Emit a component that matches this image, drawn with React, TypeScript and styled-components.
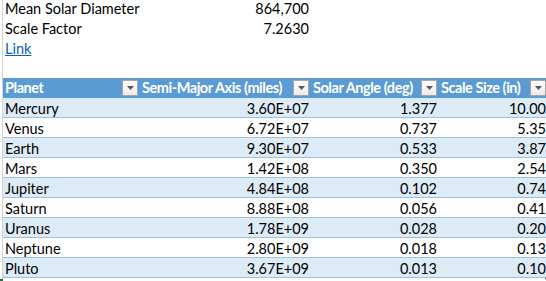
import React from "react";
import styled, { createGlobalStyle } from "styled-components";

const FONT = `"Lato", "Liberation Sans", Arial, sans-serif`;

const Global = createGlobalStyle`
  html, body { margin: 0; padding: 0; background: #ffffff; }
  body { width: 546px; height: 281px; overflow: hidden; font-family: ${FONT}; }
`;

const Sheet = styled.div`
  position: relative;
  margin: -2px 0 0 2px;
  border-left: 1px solid #d4d4d4;
  height: 290px;
  width: 560px;
  font-family: ${FONT};
  font-size: 14.5px;
  color: #000;
`;

const Row = styled.div<{ $band?: "header" | "band" | "plain" | "none" }>`
  display: grid;
  grid-template-columns: 137px 171px 128px 109px;
  height: 20px;
  box-sizing: border-box;
  background: ${(p) =>
    p.$band === "header" ? "#5b9bd5" : p.$band === "band" ? "#ddebf7" : "#ffffff"};
  border-bottom: ${(p) =>
    p.$band === "band" || p.$band === "plain" ? "1px solid #9bc2e6" : "1px solid transparent"};
`;

const Cell = styled.div<{ $right?: boolean }>`
  display: flex;
  align-items: flex-end;
  justify-content: ${(p) => (p.$right ? "flex-end" : "flex-start")};
  padding: 0 2px 0 2px;
  white-space: nowrap;
  overflow: hidden;
  line-height: 16px;
`;

const HeadCell = styled.div`
  display: flex;
  align-items: flex-start;
  justify-content: space-between;
  padding: 2px 2px 0 2px;
  color: #ffffff;
  font-weight: 700;
  letter-spacing: -0.45px;
  white-space: nowrap;
  overflow: hidden;
  line-height: 16px;
`;

const Link = styled.a`
  color: #0563c1;
  text-decoration: underline;
`;

const DropBtn = styled.span`
  flex: 0 0 auto;
  width: 14px;
  height: 14px;
  border: 1px solid #a6a6a6;
  background: linear-gradient(#ffffff, #ececec);
  display: flex;
  align-items: center;
  justify-content: center;
`;

const Handle = styled.div`
  position: absolute;
  right: 14px;
  top: 277px;
  width: 4px;
  height: 4px;
  background: linear-gradient(135deg, transparent 50%, #1f4e79 50%);
`;

const Selection = styled.div`
  position: absolute;
  left: -3px;
  top: 281px;
  width: 3px;
  height: 3px;
  background: #217346;
`;

const Drop = () => (
  <DropBtn>
    <svg width="7" height="4" viewBox="0 0 7 4">
      <path d="M0 0 H7 L3.5 4 Z" fill="#595959" />
    </svg>
  </DropBtn>
);

const planets: [string, string, string, string][] = [
  ["Mercury", "3.60E+07", "1.377", "10.00"],
  ["Venus", "6.72E+07", "0.737", "5.35"],
  ["Earth", "9.30E+07", "0.533", "3.87"],
  ["Mars", "1.42E+08", "0.350", "2.54"],
  ["Jupiter", "4.84E+08", "0.102", "0.74"],
  ["Saturn", "8.88E+08", "0.056", "0.41"],
  ["Uranus", "1.78E+09", "0.028", "0.20"],
  ["Neptune", "2.80E+09", "0.018", "0.13"],
  ["Pluto", "3.67E+09", "0.013", "0.10"],
];

const headers = ["Planet", "Semi-Major Axis (miles)", "Solar Angle (deg)", "Scale Size (in)"];

export default function App() {
  return (
    <>
      <Global />
      <Sheet>
        <Row $band="none">
          <Cell>Mean Solar Diameter</Cell>
          <Cell $right>864,700</Cell>
        </Row>
        <Row $band="none">
          <Cell>Scale Factor</Cell>
          <Cell $right>7.2630</Cell>
        </Row>
        <Row $band="none">
          <Cell>
            <Link href="#">Link</Link>
          </Cell>
        </Row>
        <Row $band="none" />
        <Row $band="header">
          {headers.map((h) => (
            <HeadCell key={h}>
              <span>{h}</span>
              <Drop />
            </HeadCell>
          ))}
        </Row>
        {planets.map((p, i) => (
          <Row key={p[0]} $band={i % 2 === 0 ? "band" : "plain"}>
            <Cell>{p[0]}</Cell>
            <Cell $right>{p[1]}</Cell>
            <Cell $right>{p[2]}</Cell>
            <Cell $right>{p[3]}</Cell>
          </Row>
        ))}
        <Handle />
        <Selection />
      </Sheet>
    </>
  );
}
